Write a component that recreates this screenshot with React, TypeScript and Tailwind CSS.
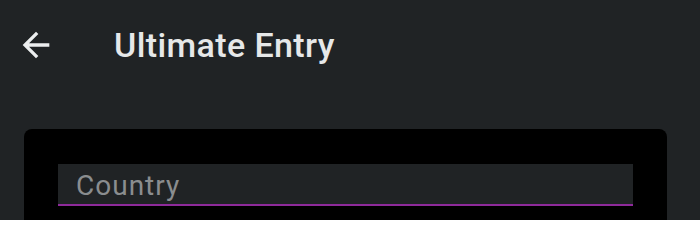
import React from "react";

export default function App() {
  return (
    <div
      className="w-[700px] h-[220px] bg-[#202325] overflow-hidden"
      style={{ fontFamily: "Roboto, 'Liberation Sans', sans-serif" }}
    >
      <div className="h-[90px] flex items-center">
        <div className="ml-[16px] w-[40px] h-[40px] flex items-center justify-center">
          <svg width="40" height="40" viewBox="0 0 24 24" fill="#eceeef">
            <path d="M20 11H7.83l5.59-5.59L12 4l-8 8 8 8 1.41-1.41L7.83 13H20v-2z" />
          </svg>
        </div>
        <div className="ml-[58px] text-[34px] font-medium text-[#e6e8e9] leading-none tracking-[0.4px]">
          Ultimate Entry
        </div>
      </div>
      <div className="mt-[39px] ml-[24px] w-[643px] h-[120px] bg-black rounded-[8px] pt-[35px] px-[34px]">
        <div className="h-[42px] bg-[#202325] border-b-2 border-[#8e2a9a] flex items-center pl-[18px]">
          <span className="text-[28px] text-[#8a8d8f] leading-none tracking-[1px] mt-[4px]">Country</span>
        </div>
      </div>
    </div>
  );
}
